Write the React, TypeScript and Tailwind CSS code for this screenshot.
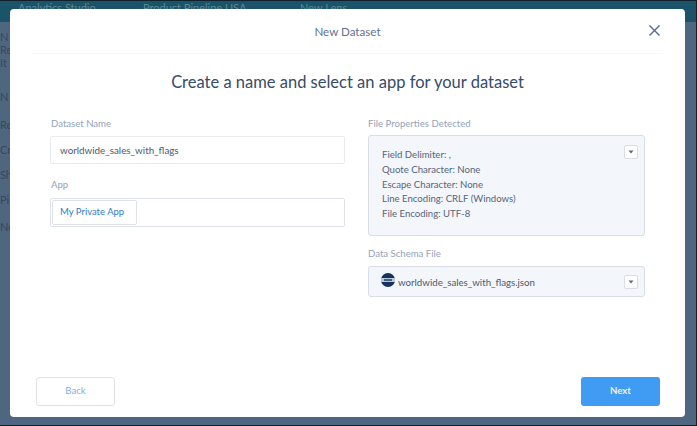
export default function App() {
  const caret = (
    <div className="flex h-[14px] w-[14px] items-center justify-center rounded-[2px] border border-[#d8dde6] bg-white">
      <svg width="6" height="4" viewBox="0 0 6 4"><path d="M0.5 0.5H5.5L3 3.5Z" fill="#54698d" /></svg>
    </div>
  );
  return (
    <div className="relative h-[426px] w-[697px] overflow-hidden border-t border-r border-b border-[#10202c] bg-[#4f6680] font-['Lato',sans-serif]">
      <div className="flex h-[21px] items-start bg-[#1b5369] pt-[2px] pl-[18px] text-[11px] leading-[10px] text-[#5d8797]">
        <span className="w-[125px]">Analytics Studio</span>
        <span className="w-[157px]">Product Pipeline USA</span>
        <span>New Lens</span>
      </div>
      <div className="flex flex-col pt-[9px] text-[11px] leading-[12px] text-[#35485c]">
        <span className="mb-[1px]">N</span>
        <span className="mb-[1px]">Re</span>
        <span className="mb-[22px]">It</span>
        <span className="mb-[16px]">N</span>
        <span className="mb-[13px]">Re</span>
        <span className="mb-[13px]">Cr</span>
        <span className="mb-[13px]">Sh</span>
        <span className="mb-[15px]">Pi</span>
        <span>No</span>
      </div>
      <div className="absolute top-[8px] left-[10px] flex h-[408px] w-[675px] flex-col rounded-[4px] bg-white">
        <div className="relative mx-[22px] flex h-[45px] items-center justify-center border-b border-[#f6f7f9] pt-[1px] text-[11.6px] text-[#5f7396]">
          New Dataset
          <svg className="absolute top-[15px] right-[2px]" width="13" height="13" viewBox="0 0 13 13" fill="none" stroke="#54698d" strokeWidth="1.4"><path d="M1.5 1.5L11.5 11.5M11.5 1.5L1.5 11.5" /></svg>
        </div>
        <h1 className="mt-[16px] text-center text-[16.5px] leading-[24px] text-[#364c68]">Create a name and select an app for your dataset</h1>
        <div className="mt-[23px] flex items-start gap-[23px] pl-[40px]">
          <div className="flex w-[295px] flex-col">
            <label className="pl-[1px] text-[9.6px] leading-[14px] text-[#94a3b8]">Dataset Name</label>
            <div className="mt-[5px] flex h-[28px] items-center rounded-[2px] border border-[#e8ebf0] pl-[9px] text-[9.8px] text-[#4a5a70]">worldwide_sales_with_flags</div>
            <label className="mt-[14px] pl-[1px] text-[9.6px] leading-[14px] text-[#94a3b8]">App</label>
            <div className="mt-[6px] flex h-[29px] items-center rounded-[2px] border border-[#dfe3e9] pl-[1px]">
              <div className="flex h-[25px] w-[85px] items-center rounded-[2px] border border-[#dfe3e9] pl-[7px] text-[9.5px] text-[#2f7bcb]">My Private App</div>
            </div>
          </div>
          <div className="flex w-[277px] flex-col">
            <label className="text-[9.6px] leading-[14px] text-[#94a3b8]">File Properties Detected</label>
            <div className="mt-[4px] flex h-[101px] items-start justify-between rounded-[3px] border border-[#d8dde6] bg-[#f3f6fb] pt-[9px] pr-[6px] pl-[13px]">
              <div className="pt-[3px] text-[9.6px] leading-[14.8px] text-[#55657b]">
                <div>Field Delimiter: ,</div>
                <div>Quote Character: None</div>
                <div>Escape Character: None</div>
                <div>Line Encoding: CRLF (Windows)</div>
                <div>File Encoding: UTF-8</div>
              </div>
              {caret}
            </div>
            <label className="mt-[11px] text-[9.6px] leading-[14px] text-[#94a3b8]">Data Schema File</label>
            <div className="mt-[5px] flex h-[31px] items-center justify-between rounded-[3px] border border-[#d8dde6] bg-[#f3f6fb] pr-[6px] pl-[12px]">
              <div className="flex items-center gap-[3px] pt-[1px] text-[9.7px] text-[#4a5a70]">
                <svg width="14" height="14" viewBox="0 0 14 14" className="mb-[4px]">
                  <circle cx="7" cy="7" r="7" fill="#16325c" />
                  <rect x="0" y="5" width="14" height="4" fill="#b9c6d6" />
                  <rect x="3" y="6" width="8" height="2" fill="#3f5f85" />
                </svg>
                worldwide_sales_with_flags.json
              </div>
              {caret}
            </div>
          </div>
        </div>
        <div className="mt-auto flex items-center justify-between pr-[25px] pb-[11px] pl-[26px]">
          <button className="h-[29px] w-[79px] rounded-[3px] border border-[#dfe3e9] bg-white text-[9.6px] text-[#7eb0e2]">Back</button>
          <button className="h-[29px] w-[79px] rounded-[3px] bg-[#409cf2] text-[9.6px] font-bold text-[#e8f3fd]">Next</button>
        </div>
      </div>
    </div>
  );
}
